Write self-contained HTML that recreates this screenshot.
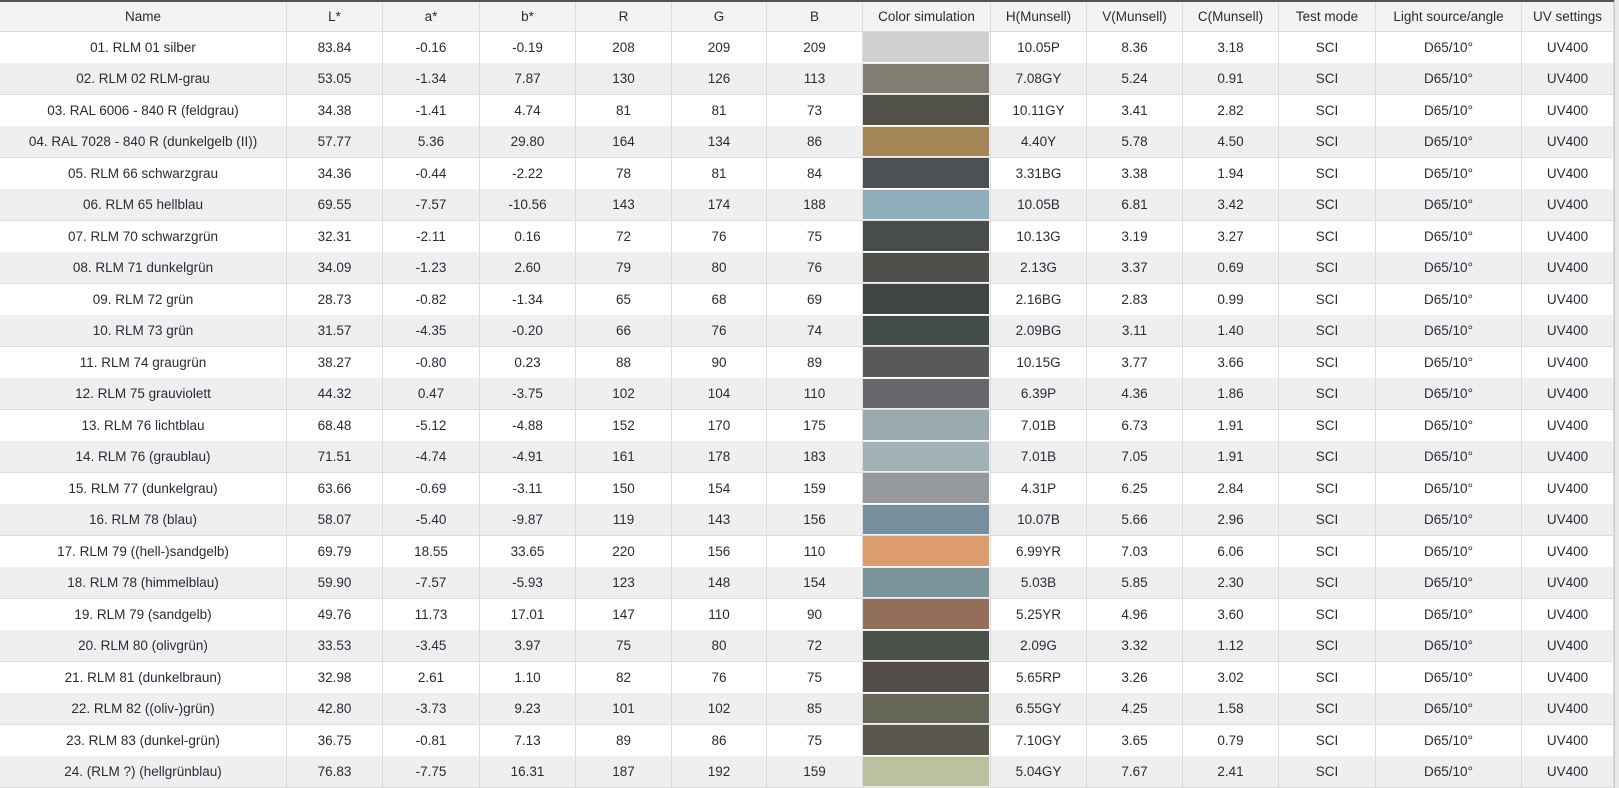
<!DOCTYPE html>
<html><head><meta charset="utf-8"><style>
body{margin:0;width:1619px;height:788px;overflow:hidden;background:#fff;font-family:"Liberation Sans",sans-serif;font-size:13.5px;color:#2a2a3a}
.r{position:absolute;left:0;width:1614px;border-bottom:1px solid #dcdcdc;box-sizing:border-box}
.c{position:absolute;top:0;bottom:0;border-right:1px solid #dcdcdc;box-sizing:border-box;display:flex;align-items:center;justify-content:center;white-space:nowrap}
.h{background:#f3f3f3;border-top:2px solid #555}
.g{background:#efefef}
.sw{position:absolute;top:1px;bottom:1px;left:0;right:1px}
</style></head><body>
<div style="position:absolute;left:1614px;top:0;width:5px;height:788px;background:#e8e8e8;border-left:1px solid #ccc"></div>
<script>
const X=[0,287,383,480,576,672,767,863,991,1087,1183,1279,1376,1522,1614];
const H=["Name","L*","a*","b*","R","G","B","Color simulation","H(Munsell)","V(Munsell)","C(Munsell)","Test mode","Light source/angle","UV settings"];
const D=[
["01. RLM 01 silber","83.84","-0.16","-0.19",208,209,209,"10.05P","8.36","3.18"],
["02. RLM 02 RLM-grau","53.05","-1.34","7.87",130,126,113,"7.08GY","5.24","0.91"],
["03. RAL 6006 - 840 R (feldgrau)","34.38","-1.41","4.74",81,81,73,"10.11GY","3.41","2.82"],
["04. RAL 7028 - 840 R (dunkelgelb (II))","57.77","5.36","29.80",164,134,86,"4.40Y","5.78","4.50"],
["05. RLM 66 schwarzgrau","34.36","-0.44","-2.22",78,81,84,"3.31BG","3.38","1.94"],
["06. RLM 65 hellblau","69.55","-7.57","-10.56",143,174,188,"10.05B","6.81","3.42"],
["07. RLM 70 schwarzgrün","32.31","-2.11","0.16",72,76,75,"10.13G","3.19","3.27"],
["08. RLM 71 dunkelgrün","34.09","-1.23","2.60",79,80,76,"2.13G","3.37","0.69"],
["09. RLM 72 grün","28.73","-0.82","-1.34",65,68,69,"2.16BG","2.83","0.99"],
["10. RLM 73 grün","31.57","-4.35","-0.20",66,76,74,"2.09BG","3.11","1.40"],
["11. RLM 74 graugrün","38.27","-0.80","0.23",88,90,89,"10.15G","3.77","3.66"],
["12. RLM 75 grauviolett","44.32","0.47","-3.75",102,104,110,"6.39P","4.36","1.86"],
["13. RLM 76 lichtblau","68.48","-5.12","-4.88",152,170,175,"7.01B","6.73","1.91"],
["14. RLM 76 (graublau)","71.51","-4.74","-4.91",161,178,183,"7.01B","7.05","1.91"],
["15. RLM 77 (dunkelgrau)","63.66","-0.69","-3.11",150,154,159,"4.31P","6.25","2.84"],
["16. RLM 78 (blau)","58.07","-5.40","-9.87",119,143,156,"10.07B","5.66","2.96"],
["17. RLM 79 ((hell-)sandgelb)","69.79","18.55","33.65",220,156,110,"6.99YR","7.03","6.06"],
["18. RLM 78 (himmelblau)","59.90","-7.57","-5.93",123,148,154,"5.03B","5.85","2.30"],
["19. RLM 79 (sandgelb)","49.76","11.73","17.01",147,110,90,"5.25YR","4.96","3.60"],
["20. RLM 80 (olivgrün)","33.53","-3.45","3.97",75,80,72,"2.09G","3.32","1.12"],
["21. RLM 81 (dunkelbraun)","32.98","2.61","1.10",82,76,75,"5.65RP","3.26","3.02"],
["22. RLM 82 ((oliv-)grün)","42.80","-3.73","9.23",101,102,85,"6.55GY","4.25","1.58"],
["23. RLM 83 (dunkel-grün)","36.75","-0.81","7.13",89,86,75,"7.10GY","3.65","0.79"],
["24. (RLM ?) (hellgrünblau)","76.83","-7.75","16.31",187,192,159,"5.04GY","7.67","2.41"]];
let o='';
function row(top,h,cls,cells,sw){o+=`<div class="r ${cls}" style="top:${top}px;height:${h}px">`;
for(let i=0;i<14;i++){o+=`<div class="c" style="left:${X[i]}px;width:${X[i+1]-X[i]}px">${i==7&&sw?`<div class="sw" style="background:${sw}"></div>`:cells[i]}</div>`;}o+='</div>';}
row(0,32,'h',H);
D.forEach((d,i)=>{const t=Math.round(31+i*31.5),b=Math.round(31+(i+1)*31.5);
row(t,b-t+1,i%2?'g':'',[d[0],d[1],d[2],d[3],d[4],d[5],d[6],'',d[7],d[8],d[9],'SCI','D65/10°','UV400'],`rgb(${d[4]},${d[5]},${d[6]})`);});
document.write(o);
</script>
</body></html>
